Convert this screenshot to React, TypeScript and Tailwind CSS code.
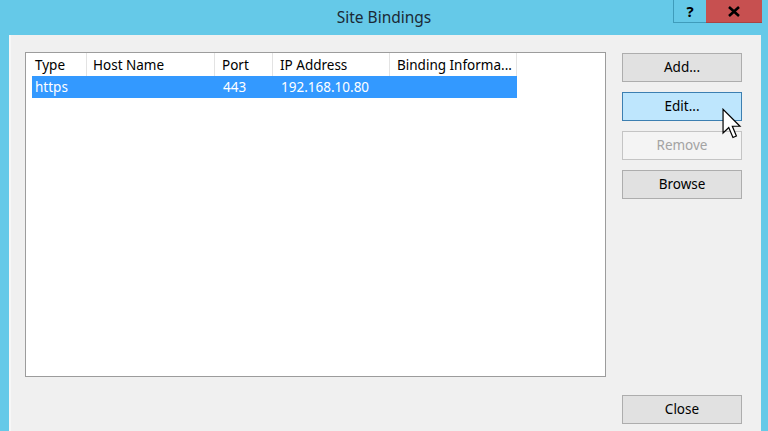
import React from 'react';

const font = "font-['Noto_Sans','Open_Sans',sans-serif]";

function HeaderCell({ label, className }: { label: string; className: string }): React.ReactElement {
  return (
    <div className={`h-full flex items-center pt-[1px] border-r border-[#E3E3E3] text-[13.5px] text-black whitespace-nowrap overflow-hidden ${className}`}>
      {label}
    </div>
  );
}

function DialogButton({
  label,
  variant = 'normal',
}: {
  label: string;
  variant?: 'normal' | 'hover' | 'disabled';
}): React.ReactElement {
  const styles = {
    normal: 'bg-[#E1E1E1] border-[#ADADAD] text-black',
    hover: 'bg-[#BEE6FD] border-[#3C7FB1] text-black',
    disabled: 'bg-[#F4F4F4] border-[#C4C4C4] text-[#A3A3A3]',
  }[variant];
  return (
    <button type="button" className={`h-[29px] w-[120px] border flex items-center justify-center text-[13.5px] ${styles}`}>
      {label}
    </button>
  );
}

function Cursor(): React.ReactElement {
  return (
    <svg className="absolute left-[722px] top-[108px]" width="21" height="32" viewBox="0 0 14 21">
      <path
        d="M0.7 0.7 L0.7 16.5 L4.5 12.8 L7.3 19.5 L9.6 18.5 L6.9 12 L12 12 Z"
        fill="#fff"
        stroke="#000"
        strokeWidth="0.8"
        strokeLinejoin="miter"
      />
    </svg>
  );
}

export default function App(): React.ReactElement {
  return (
    <div className={`relative w-[768px] h-[431px] overflow-hidden bg-[#65C9E8] flex flex-col ${font}`}>
      {/* Title bar */}
      <div className="grid grid-cols-[1fr_auto_1fr] h-[35px] shrink-0">
        <div />
        <div className="flex items-center pt-[1px] text-[15.5px] text-[#1B2A36]">Site Bindings</div>
        <div className="flex justify-end items-start pr-[6px]">
          <div className="w-[33px] h-[23px] border-l border-b border-[#3F9CBB] flex items-center justify-center text-[15px] font-bold text-black">
            ?
          </div>
          <div className="w-[56px] h-[23px] bg-[#C75050] border-b border-[#A84444] flex items-center justify-center">
            <svg width="12" height="11" viewBox="0 0 12 11">
              <path d="M1 1 L11 10 M11 1 L1 10" stroke="#000" strokeWidth="2.6" />
            </svg>
          </div>
        </div>
      </div>

      {/* Client area */}
      <div className="flex-1 ml-[9px] mr-[7px] bg-[#F0F0F0] border-l-2 border-[#F7F7F7] flex pl-[14px] pt-[17px]">
        {/* List view */}
        <div className="w-[581px] h-[325px] border border-[#9C9C9C] bg-white flex flex-col">
          <div className="flex h-[23px] shrink-0">
            <HeaderCell label="Type" className="w-[61px] pl-[9px]" />
            <HeaderCell label="Host Name" className="w-[128px] pl-[6px]" />
            <HeaderCell label="Port" className="w-[58px] pl-[7px]" />
            <HeaderCell label="IP Address" className="w-[117px] pl-[7px]" />
            <HeaderCell label="Binding Informa..." className="w-[127px] pl-[7px]" />
          </div>
          <div className="pl-[6px]">
            <div className="w-[485px] h-[22px] pt-[1px] bg-[#3399FF] flex items-center text-[13.5px] text-white">
              <div className="w-[55px] pl-[3px]">https</div>
              <div className="w-[128px]" />
              <div className="w-[58px] pl-[8px]">443</div>
              <div className="w-[117px] pl-[8px]">192.168.10.80</div>
            </div>
          </div>
        </div>

        {/* Buttons */}
        <div className="ml-[16px] mt-[1px] h-[371px] flex flex-col gap-[10px]">
          <DialogButton label="Add..." />
          <DialogButton label="Edit..." variant="hover" />
          <DialogButton label="Remove" variant="disabled" />
          <DialogButton label="Browse" />
          <div className="mt-auto">
            <DialogButton label="Close" />
          </div>
        </div>
      </div>

      <Cursor />
    </div>
  );
}
